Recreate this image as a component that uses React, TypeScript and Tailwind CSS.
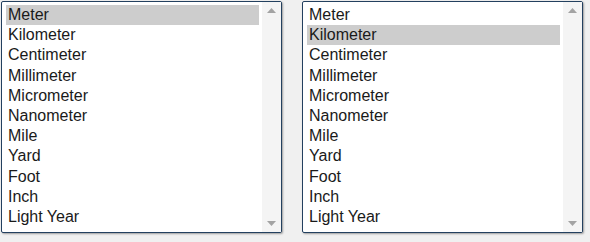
import React from "react";

const items = ["Meter","Kilometer","Centimeter","Millimeter","Micrometer","Nanometer","Mile","Yard","Foot","Inch","Light Year"];

function ListBox({ selected }: { selected: number }) {
  return (
    <div className="flex w-[281px] h-[232px] border border-[#23405f] bg-white shadow-[1px_1px_2px_rgba(0,0,0,0.35)] rounded-[2px]">
      <div className="flex-1 flex flex-col pl-[4px] pt-[3px] pr-[3px]">
        {items.map((t, i) => (
          <div
            key={t}
            className={`h-[20.2px] leading-[20px] pl-[2px] text-[16px] text-[#1a1a1a] ${i === selected ? "bg-[#cdcdcd]" : ""}`}
            style={{ fontFamily: '"Liberation Sans", Arial, sans-serif' }}
          >
            {t}
          </div>
        ))}
      </div>
      <div className="w-[19px] bg-[#f4f4f4] flex flex-col justify-between items-center py-[6px]">
        <svg width="9" height="5" viewBox="0 0 9 5"><polygon points="4.5,0 9,5 0,5" fill="#a3a3a3" /></svg>
        <svg width="9" height="5" viewBox="0 0 9 5"><polygon points="0,0 9,0 4.5,5" fill="#a3a3a3" /></svg>
      </div>
    </div>
  );
}

export default function App() {
  return (
    <div className="w-[590px] h-[242px] bg-[#f0f0f0] pt-[1px] pl-[1px] flex gap-[20px]">
      <ListBox selected={0} />
      <ListBox selected={1} />
    </div>
  );
}
